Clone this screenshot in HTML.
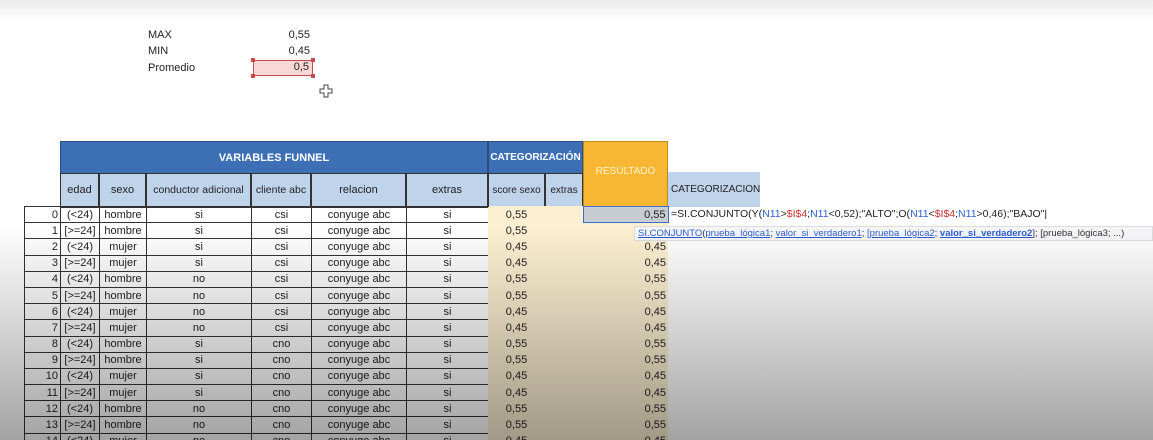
<!DOCTYPE html>
<html><head><meta charset="utf-8">
<style>
*{margin:0;padding:0;box-sizing:border-box}
html{width:1153px;height:440px;overflow:hidden}
body{width:1153px;height:440px;overflow:hidden;background:#fff;font-family:"Liberation Sans",sans-serif;font-size:11px;color:#222;position:relative}
.a{position:absolute}
.top{left:0;top:0;width:1153px;height:22px;background:linear-gradient(#ebebeb,#fff)}
table{border-collapse:collapse;table-layout:fixed;position:absolute}
td{border:1px solid #333;height:16.2px;padding:0 2px;white-space:nowrap;overflow:hidden;text-align:center;line-height:14px}
.r{text-align:right}
.sc{background:#fdf0d2;border:none}
.ov{left:0;top:0;width:1153px;height:440px;background:linear-gradient(rgba(0,0,0,0) 0,rgba(0,0,0,0) 225px,rgba(0,0,0,0.12) 300px,rgba(0,0,0,0.36) 440px);pointer-events:none}
.h1{background:#3d6fb5;color:#fff;font-weight:bold;border:1px solid #2a4f85;text-align:center;line-height:32px}
.h2{background:#bfd3eb;border:1px solid #333;text-align:center}
.b{color:#2a5fd0}.rd{color:#c8322e}
</style></head><body>
<div class="a top"></div>
<div class="a" style="left:148px;top:29px">MAX</div>
<div class="a" style="left:148px;top:45px">MIN</div>
<div class="a" style="left:148px;top:62px">Promedio</div>
<div class="a" style="left:270px;top:29px;width:40px;text-align:right">0,55</div>
<div class="a" style="left:270px;top:45px;width:40px;text-align:right">0,45</div>
<div class="a" style="left:253px;top:60px;width:60px;height:16px;background:#f8d7d7;border:1.5px solid #c94a4a;text-align:right;padding-right:3px;line-height:13px">0,5</div>
<div class="a" style="left:251px;top:58px;width:4px;height:4px;background:#c94a4a"></div>
<div class="a" style="left:311px;top:58px;width:4px;height:4px;background:#c94a4a"></div>
<div class="a" style="left:251px;top:74px;width:4px;height:4px;background:#c94a4a"></div>
<div class="a" style="left:311px;top:74px;width:4px;height:4px;background:#c94a4a"></div>
<svg class="a" style="left:319px;top:84px" width="14" height="14" viewBox="0 0 14 14"><path d="M5 1h4v4h4v4h-4v4h-4v-4h-4v-4h4z" fill="#fff" stroke="#444" stroke-width="1"/></svg>

<div class="a h1" style="left:60px;top:141px;width:428px;height:33px">VARIABLES FUNNEL</div>
<div class="a h1" style="left:488px;top:141px;width:95px;height:33px;font-size:10px">CATEGORIZACIÓN</div>
<div class="a" style="left:583px;top:141px;width:85px;height:66px;background:#f7b733;border:1px solid #c08a1a;color:#fff3d0;font-size:10px;text-align:center;padding-top:24px">RESULTADO</div>
<div class="a" style="left:668px;top:172px;width:92px;height:35px;background:#bfd3eb;line-height:35px;padding-left:3px;font-size:10px">CATEGORIZACION</div>
<div class="a h2" style="left:60px;top:173px;width:39px;height:35px;line-height:33px">edad</div>
<div class="a h2" style="left:99px;top:173px;width:47px;height:35px;line-height:33px">sexo</div>
<div class="a h2" style="left:146px;top:173px;width:105px;height:35px;line-height:33px;font-size:10.5px">conductor adicional</div>
<div class="a h2" style="left:251px;top:173px;width:60px;height:35px;line-height:33px;font-size:10.5px">cliente abc</div>
<div class="a h2" style="left:311px;top:173px;width:95px;height:35px;line-height:33px">relacion</div>
<div class="a h2" style="left:406px;top:173px;width:82px;height:35px;line-height:33px">extras</div>
<div class="a h2" style="left:488px;top:173px;width:57px;height:35px;line-height:33px;font-size:10px">score sexo</div>
<div class="a h2" style="left:545px;top:173px;width:38px;height:35px;line-height:33px;font-size:10px">extras</div>

<div class="a" style="left:488px;top:206px;width:180px;height:234px;background:#fdf0d2"></div>

<table style="left:24px;top:206px;width:464px">
<colgroup><col style="width:36px"><col style="width:39px"><col style="width:47px"><col style="width:105px"><col style="width:60px"><col style="width:95px"><col style="width:82px"></colgroup>
<tr><td class="r">0</td><td>(&lt;24)</td><td>hombre</td><td>si</td><td>csi</td><td>conyuge abc</td><td>si</td></tr>
<tr><td class="r">1</td><td>[&gt;=24]</td><td>hombre</td><td>si</td><td>csi</td><td>conyuge abc</td><td>si</td></tr>
<tr><td class="r">2</td><td>(&lt;24)</td><td>mujer</td><td>si</td><td>csi</td><td>conyuge abc</td><td>si</td></tr>
<tr><td class="r">3</td><td>[&gt;=24]</td><td>mujer</td><td>si</td><td>csi</td><td>conyuge abc</td><td>si</td></tr>
<tr><td class="r">4</td><td>(&lt;24)</td><td>hombre</td><td>no</td><td>csi</td><td>conyuge abc</td><td>si</td></tr>
<tr><td class="r">5</td><td>[&gt;=24]</td><td>hombre</td><td>no</td><td>csi</td><td>conyuge abc</td><td>si</td></tr>
<tr><td class="r">6</td><td>(&lt;24)</td><td>mujer</td><td>no</td><td>csi</td><td>conyuge abc</td><td>si</td></tr>
<tr><td class="r">7</td><td>[&gt;=24]</td><td>mujer</td><td>no</td><td>csi</td><td>conyuge abc</td><td>si</td></tr>
<tr><td class="r">8</td><td>(&lt;24)</td><td>hombre</td><td>si</td><td>cno</td><td>conyuge abc</td><td>si</td></tr>
<tr><td class="r">9</td><td>[&gt;=24]</td><td>hombre</td><td>si</td><td>cno</td><td>conyuge abc</td><td>si</td></tr>
<tr><td class="r">10</td><td>(&lt;24)</td><td>mujer</td><td>si</td><td>cno</td><td>conyuge abc</td><td>si</td></tr>
<tr><td class="r">11</td><td>[&gt;=24]</td><td>mujer</td><td>si</td><td>cno</td><td>conyuge abc</td><td>si</td></tr>
<tr><td class="r">12</td><td>(&lt;24)</td><td>hombre</td><td>no</td><td>cno</td><td>conyuge abc</td><td>si</td></tr>
<tr><td class="r">13</td><td>[&gt;=24]</td><td>hombre</td><td>no</td><td>cno</td><td>conyuge abc</td><td>si</td></tr>
<tr><td class="r">14</td><td>(&lt;24)</td><td>mujer</td><td>no</td><td>cno</td><td>conyuge abc</td><td>si</td></tr>
</table>

<table style="left:488px;top:206px;width:180px">
<colgroup><col style="width:57px"><col style="width:38px"><col style="width:85px"></colgroup>
<tr><td class="sc">0,55</td><td class="sc"></td><td class="r" style="background:#c8ccd3;border:1.5px solid #3a6fd0">0,55</td></tr>
<tr><td class="sc">0,55</td><td class="sc"></td><td class="sc r"></td></tr>
<tr><td class="sc">0,45</td><td class="sc"></td><td class="sc r">0,45</td></tr>
<tr><td class="sc">0,45</td><td class="sc"></td><td class="sc r">0,45</td></tr>
<tr><td class="sc">0,55</td><td class="sc"></td><td class="sc r">0,55</td></tr>
<tr><td class="sc">0,55</td><td class="sc"></td><td class="sc r">0,55</td></tr>
<tr><td class="sc">0,45</td><td class="sc"></td><td class="sc r">0,45</td></tr>
<tr><td class="sc">0,45</td><td class="sc"></td><td class="sc r">0,45</td></tr>
<tr><td class="sc">0,55</td><td class="sc"></td><td class="sc r">0,55</td></tr>
<tr><td class="sc">0,55</td><td class="sc"></td><td class="sc r">0,55</td></tr>
<tr><td class="sc">0,45</td><td class="sc"></td><td class="sc r">0,45</td></tr>
<tr><td class="sc">0,45</td><td class="sc"></td><td class="sc r">0,45</td></tr>
<tr><td class="sc">0,55</td><td class="sc"></td><td class="sc r">0,55</td></tr>
<tr><td class="sc">0,55</td><td class="sc"></td><td class="sc r">0,55</td></tr>
<tr><td class="sc">0,45</td><td class="sc"></td><td class="sc r">0,45</td></tr>
</table>

<div class="a" style="left:669px;top:207px;width:362px;height:15px;background:#fff;line-height:15px;padding-left:2px;font-size:10.5px;white-space:nowrap">=SI.CONJUNTO(Y(<span class="b">N11</span>&gt;<span class="rd">$I$4</span>;<span class="b">N11</span>&lt;0,52);"ALTO";O(<span class="b">N11</span>&lt;<span class="rd">$I$4</span>;<span class="b">N11</span>&gt;0,46);"BAJO"|</div>
<div class="a" style="left:634px;top:226px;width:519px;height:15px;background:#f7f7f9;border:1px solid #ddd;line-height:13px;padding-left:3px;font-size:9.5px;white-space:nowrap;color:#333"><span class="b" style="text-decoration:underline">SI.CONJUNTO</span>(<span class="b" style="text-decoration:underline">prueba_lógica1</span>; <span class="b" style="text-decoration:underline">valor_si_verdadero1</span>; <span class="b" style="text-decoration:underline">[prueba_lógica2</span>; <b class="b" style="text-decoration:underline">valor_si_verdadero2</b>]; [prueba_lógica3; ...)</div>

<div class="a ov"></div>
</body></html>
